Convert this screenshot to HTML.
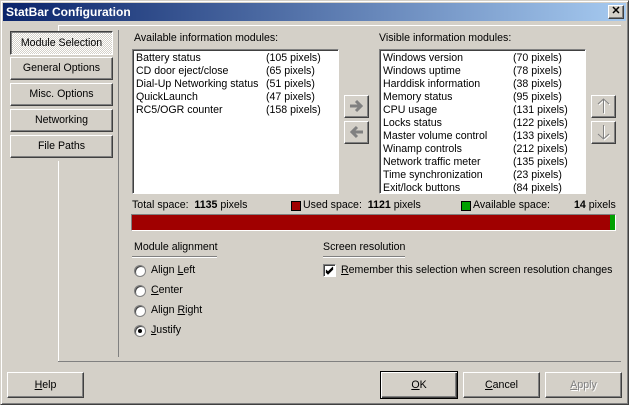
<!DOCTYPE html>
<html><head><style>
*{box-sizing:border-box}
body{margin:0;width:629px;height:405px;overflow:hidden;background:#d4d0c8;font-family:"Liberation Sans",Arial,sans-serif;font-size:10.6px;color:#000;position:relative}
.a{position:absolute}
.win{left:0;top:0;width:629px;height:405px;border:1px solid #d4d0c8;border-right-color:#404040;border-bottom-color:#404040;box-shadow:inset 1px 1px #fff,inset -1px -1px #808080}
.title{left:3px;top:3px;width:623px;height:18px;background:linear-gradient(to right,#0a246a,#a6caf0);color:#fff;font-weight:bold;font-size:12px;line-height:18px;padding-left:3px}
.btn{border:1px solid;border-color:#fff #404040 #404040 #fff;box-shadow:inset -1px -1px #808080;text-align:center;background:#d4d0c8}
.lb{background:#fff;border:1px solid;border-color:#808080 #fff #fff #808080;box-shadow:inset 1px 1px #404040;padding:2px 3px;line-height:13px;font-size:10.6px}
.lb div{white-space:nowrap;position:relative}
.lb span{position:absolute}
u{text-decoration:underline}
.radio{width:12px;height:12px;border-radius:50%;background:#fff;border:1px solid #808080;box-shadow:inset 1px 1px #404040}
</style></head><body>
<div class="a win"></div>
<div class="a title">StatBar Configuration</div>
<div class="a btn" style="left:608px;top:5px;width:16px;height:14px;font-weight:bold;font-size:11px;line-height:11px">✕</div>

<div class="a" style="left:58px;top:25px;width:563px;height:1px;background:#fff"></div>
<div class="a" style="left:58px;top:25px;width:1px;height:337px;background:#fff"></div>
<div class="a" style="left:58px;top:361px;width:563px;height:1px;background:#808080"></div>
<div class="a" style="left:118px;top:30px;width:1px;height:327px;background:#808080"></div>
<div class="a" style="left:9px;top:31px;width:104px;height:130px;background:#d4d0c8"></div>

<div class="a btn" style="left:10px;top:31px;width:103px;height:24px;line-height:22px;border-color:#404040 #fff #fff #404040;box-shadow:inset 1px 1px #808080;background:repeating-conic-gradient(#fff 0 25%,#d4d0c8 0 50%) 0 0/2px 2px">Module Selection</div>
<div class="a btn" style="left:10px;top:57px;width:103px;height:23px;line-height:21px">General Options</div>
<div class="a btn" style="left:10px;top:83px;width:103px;height:23px;line-height:21px">Misc. Options</div>
<div class="a btn" style="left:10px;top:109px;width:103px;height:23px;line-height:21px">Networking</div>
<div class="a btn" style="left:10px;top:135px;width:103px;height:23px;line-height:21px">File Paths</div>

<div class="a" style="left:134px;top:32px">Available information modules:</div>
<div class="a lb" style="left:132px;top:49px;width:207px;height:145px">
<div>Battery status<span style="left:130px">(105 pixels)</span></div>
<div>CD door eject/close<span style="left:130px">(65 pixels)</span></div>
<div>Dial-Up Networking status<span style="left:130px">(51 pixels)</span></div>
<div>QuickLaunch<span style="left:130px">(47 pixels)</span></div>
<div>RC5/OGR counter<span style="left:130px">(158 pixels)</span></div>
</div>
<div class="a" style="left:379px;top:32px">Visible information modules:</div>
<div class="a lb" style="left:379px;top:49px;width:207px;height:145px">
<div>Windows version<span style="left:130px">(70 pixels)</span></div>
<div>Windows uptime<span style="left:130px">(78 pixels)</span></div>
<div>Harddisk information<span style="left:130px">(38 pixels)</span></div>
<div>Memory status<span style="left:130px">(95 pixels)</span></div>
<div>CPU usage<span style="left:130px">(131 pixels)</span></div>
<div>Locks status<span style="left:130px">(122 pixels)</span></div>
<div>Master volume control<span style="left:130px">(133 pixels)</span></div>
<div>Winamp controls<span style="left:130px">(212 pixels)</span></div>
<div>Network traffic meter<span style="left:130px">(135 pixels)</span></div>
<div>Time synchronization<span style="left:130px">(23 pixels)</span></div>
<div>Exit/lock buttons<span style="left:130px">(84 pixels)</span></div>
</div>

<div class="a btn" style="left:344px;top:95px;width:25px;height:23px"><svg width="23" height="21"><path d="M5 10h11M11 5l5 5-5 5" stroke="#808080" stroke-width="3" fill="none"/></svg></div>
<div class="a btn" style="left:344px;top:121px;width:25px;height:23px"><svg width="23" height="21"><path d="M7 10h11M12 5l-5 5 5 5" stroke="#808080" stroke-width="3" fill="none"/></svg></div>
<div class="a btn" style="left:591px;top:95px;width:25px;height:23px"><svg width="23" height="21"><path d="M11.5 3v14M6 8l5.5-5 5.5 5" stroke="#fff" stroke-width="1" fill="none" transform="translate(1,1)"/><path d="M11.5 3v14M6 8l5.5-5 5.5 5" stroke="#808080" stroke-width="1" fill="none"/></svg></div>
<div class="a btn" style="left:591px;top:121px;width:25px;height:23px"><svg width="23" height="21"><path d="M11.5 3v14M6 12l5.5 5 5.5-5" stroke="#fff" stroke-width="1" fill="none" transform="translate(1,1)"/><path d="M11.5 3v14M6 12l5.5 5 5.5-5" stroke="#808080" stroke-width="1" fill="none"/></svg></div>

<div class="a" style="left:132px;top:199px">Total space:&nbsp; <b>1135</b> pixels</div>
<div class="a" style="left:291px;top:201px;width:10px;height:10px;background:#a00000;border:1px solid #000"></div>
<div class="a" style="left:303px;top:199px">Used space:&nbsp; <b>1121</b> pixels</div>
<div class="a" style="left:461px;top:201px;width:10px;height:10px;background:#00a000;border:1px solid #000"></div>
<div class="a" style="left:473px;top:199px">Available space:</div>
<div class="a" style="left:574px;top:199px"><b>14</b> pixels</div>
<div class="a" style="left:131px;top:214px;width:485px;height:17px;border:1px solid;border-color:#808080 #fff #fff #808080;background:#a00000"><div style="position:absolute;right:0;top:0;width:5px;height:15px;background:#00a000"></div></div>

<div class="a" style="left:134px;top:241px">Module alignment</div>
<div class="a" style="left:132px;top:256px;width:85px;height:1px;background:#808080;box-shadow:0 1px #fff"></div>
<div class="a radio" style="left:134px;top:265px"></div><div class="a" style="left:151px;top:264px">Align <u>L</u>eft</div>
<div class="a radio" style="left:134px;top:285px"></div><div class="a" style="left:151px;top:284px"><u>C</u>enter</div>
<div class="a radio" style="left:134px;top:305px"></div><div class="a" style="left:151px;top:304px">Align <u>R</u>ight</div>
<div class="a radio" style="left:134px;top:325px"><div style="position:absolute;left:3px;top:3px;width:4px;height:4px;background:#000;border-radius:50%"></div></div><div class="a" style="left:151px;top:324px"><u>J</u>ustify</div>

<div class="a" style="left:323px;top:241px">Screen resolution</div>
<div class="a" style="left:323px;top:256px;width:82px;height:1px;background:#808080;box-shadow:0 1px #fff"></div>
<div class="a" style="left:323px;top:264px;width:13px;height:13px;background:#fff;border:1px solid;border-color:#808080 #fff #fff #808080;box-shadow:inset 1px 1px #404040"><svg width="11" height="11" style="position:absolute;left:0;top:0"><path d="M2 5l2 2 5-5M2 6l2 2 5-5M2 7l2 2 5-5" stroke="#000" fill="none"/></svg></div>
<div class="a" style="left:341px;top:264px"><u>R</u>emember this selection when screen resolution changes</div>

<div class="a btn" style="left:7px;top:372px;width:77px;height:26px;line-height:24px"><u>H</u>elp</div>
<div class="a btn" style="left:380px;top:371px;width:78px;height:28px;line-height:26px;border:1px solid #000;box-shadow:inset 1px 1px #fff,inset -1px -1px #404040,inset -2px -2px #808080"><u>O</u>K</div>
<div class="a btn" style="left:463px;top:372px;width:77px;height:26px;line-height:24px"><u>C</u>ancel</div>
<div class="a btn" style="left:545px;top:372px;width:77px;height:26px;line-height:24px;color:#808080;text-shadow:1px 1px #fff"><u>A</u>pply</div>
</body></html>
